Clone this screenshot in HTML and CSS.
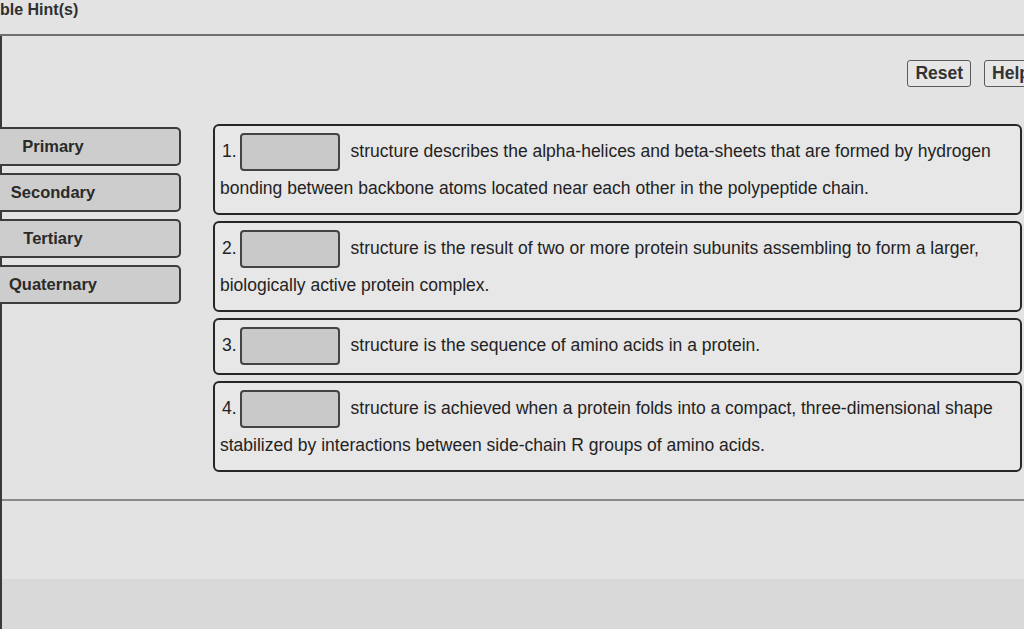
FILE: index.html
```html
<!DOCTYPE html>
<html lang="en">
<head>
<meta charset="utf-8">
<title>Protein structure – drag and drop</title>
<link rel="stylesheet" href="styles.css">
</head>
<body>
<div class="page">
  <div class="hint-head">ble Hint(s)</div>

  <div class="panel">
    <div class="toolbar">
      <button class="tool-btn" type="button">Reset</button>
      <button class="tool-btn" type="button">Help</button>
    </div>

    <div class="workspace">
      <div class="labels">
        <div class="label">Primary</div>
        <div class="label">Secondary</div>
        <div class="label">Tertiary</div>
        <div class="label">Quaternary</div>
      </div>

      <div class="targets">
        <div class="target">
          <span class="num">1.</span><span class="drop"></span>structure describes the alpha-helices and beta-sheets that are formed by hydrogen bonding between backbone atoms located near each other in the polypeptide chain.
        </div>
        <div class="target">
          <span class="num">2.</span><span class="drop"></span>structure is the result of two or more protein subunits assembling to form a larger, biologically active protein complex.
        </div>
        <div class="target">
          <span class="num">3.</span><span class="drop"></span>structure is the sequence of amino acids in a protein.
        </div>
        <div class="target">
          <span class="num">4.</span><span class="drop"></span>structure is achieved when a protein folds into a compact, three-dimensional shape stabilized by interactions between side-chain R groups of amino acids.
        </div>
      </div>
    </div>

    <div class="footer-rule"></div>
    <div class="lower-band"></div>
  </div>
</div>
</body>
</html>
```

FILE: styles.css
```css
html, body {
  margin: 0;
  padding: 0;
  overflow: hidden;
}

body {
  background: #e3e3e3;
  font-family: "Liberation Sans", Arial, sans-serif;
  color: #232323;
}

.page {
  height: 629px;
  display: flex;
  flex-direction: column;
}

.hint-head {
  height: 33px;
  padding-top: 1px;
  font-size: 16px;
  font-weight: bold;
  color: #303030;
  border-bottom: 2px solid #707070;
}

/* main activity area, framed on its left edge */
.panel {
  flex: 1;
  display: flex;
  flex-direction: column;
  border-left: 2px solid #3a3a3a;
}

.toolbar {
  display: flex;
  justify-content: flex-end;
  gap: 13px;
  margin-right: -14px;
  padding-top: 24px;
}

.tool-btn {
  height: 27px;
  padding: 0 7px;
  background: #e6e6e6;
  border: 1px solid #5a5a5a;
  border-radius: 3px;
  font-family: "Liberation Sans", Arial, sans-serif;
  font-size: 17.5px;
  font-weight: bold;
  color: #333;
}

.workspace {
  display: flex;
  gap: 32px;
  margin-top: 37px;
}

.labels {
  width: 181px;
  margin-left: -2px;
  padding-top: 3px;
  display: flex;
  flex-direction: column;
  gap: 7px;
}

.label {
  box-sizing: border-box;
  height: 39px;
  padding-right: 73px;
  display: flex;
  align-items: center;
  justify-content: center;
  background: #cdcdcd;
  border: 2px solid #3c3c3c;
  border-left: none;
  border-radius: 0 5px 5px 0;
  font-size: 16.5px;
  font-weight: bold;
  color: #2a2a2a;
}

.targets {
  width: 809px;
  display: flex;
  flex-direction: column;
  gap: 6px;
}

.target {
  box-sizing: border-box;
  border: 2px solid #262626;
  border-radius: 6px;
  background: #e7e7e7;
  padding: 7px 6px 8px 5px;
  font-size: 17.5px;
  line-height: 34px;
}

.num {
  margin-left: 2px;
  margin-right: 3px;
}

.drop {
  display: inline-block;
  box-sizing: border-box;
  width: 100px;
  height: 38px;
  margin-right: 11px;
  vertical-align: middle;
  background: #c9c9c9;
  border: 2px solid #444;
  border-radius: 4px;
}

.footer-rule {
  margin-top: 27px;
  border-top: 2px solid #8a8a8a;
}

.lower-band {
  margin-top: 78px;
  flex: 1;
  background: #d9d9d9;
}
```
